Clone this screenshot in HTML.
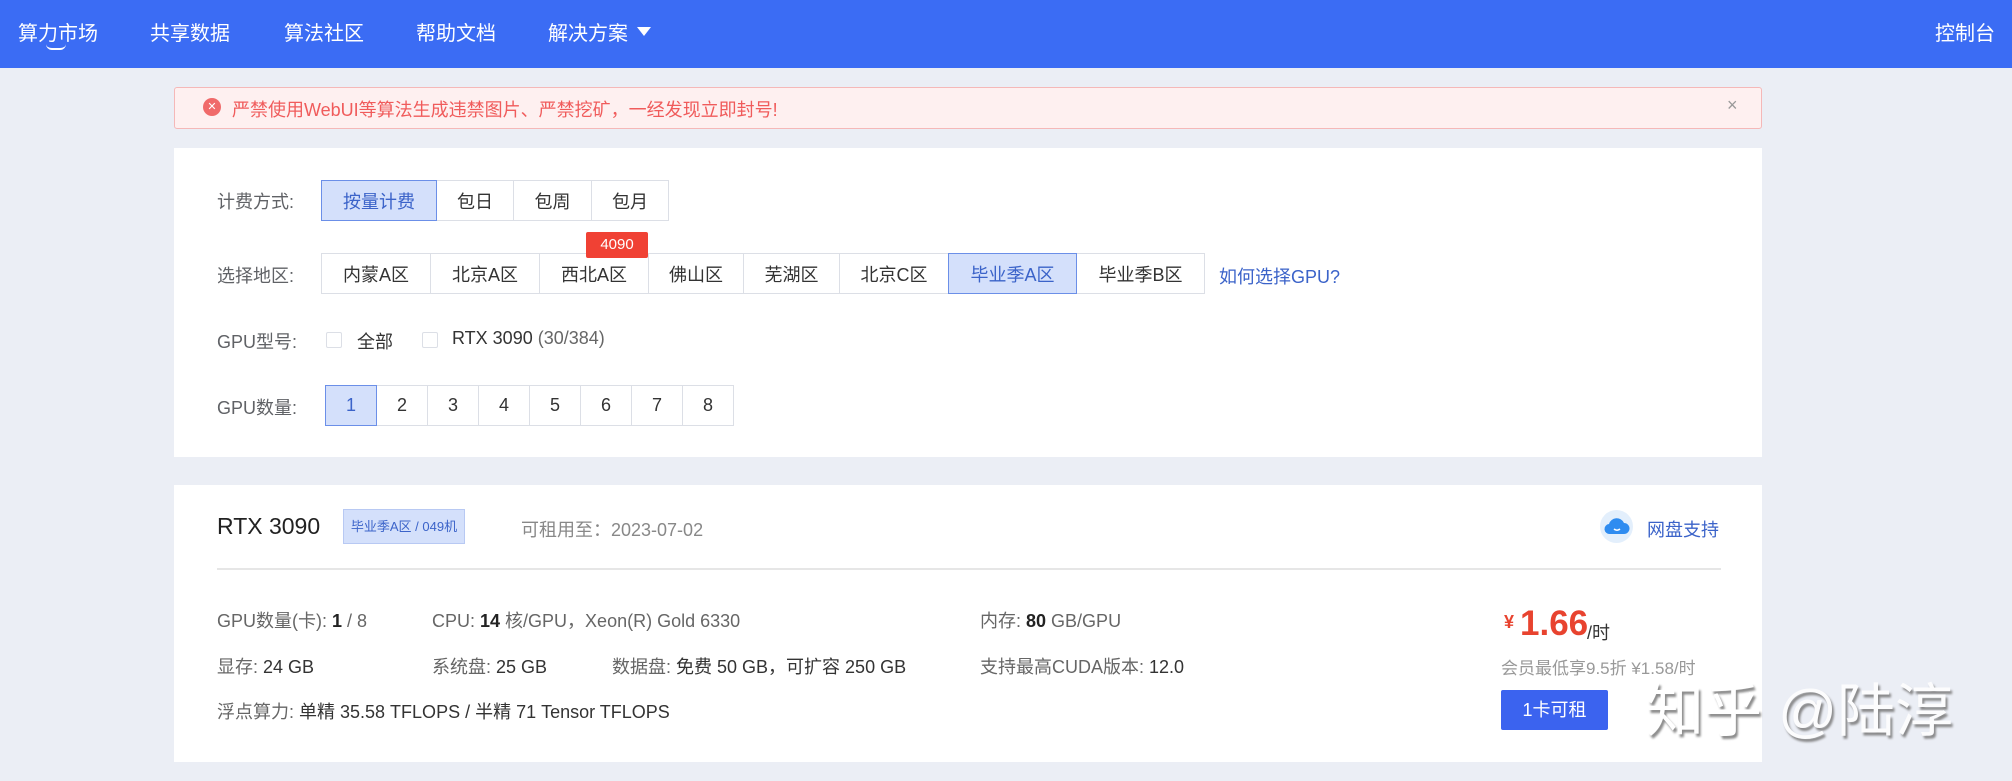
<!DOCTYPE html>
<html><head><meta charset="utf-8"><style>
*{box-sizing:border-box;margin:0;padding:0}
body{width:2012px;height:781px;background:#ebeef5;font-family:"Liberation Sans","Noto Sans CJK SC",sans-serif;font-size:18px;color:#333;position:relative;overflow:hidden}
.a{position:absolute;white-space:nowrap}
.nav{position:absolute;left:0;top:0;width:2012px;height:68px;background:#3b6cf4;color:#fff;font-size:20px}
.nav .a{top:17px}
.alert{left:174px;top:87px;width:1588px;height:42px;background:#fef0f0;border:1px solid #f5b8b8;border-radius:3px}
.card{background:#fff}
.lbl{color:#606266;font-size:18px}
.grp{display:flex;position:absolute}
.grp div{border:1px solid #dcdfe6;margin-left:-1px;display:flex;align-items:center;justify-content:center;font-size:18px;color:#333;background:#fff}
.grp div.on{background:#d4e0fb;border-color:#6b8fe8;color:#3b63c9;position:relative;z-index:1}
.cb{width:16px;height:16px;border:1px solid #dcdfe6;border-radius:2px;background:#fff}
.g{color:#666}
b{font-weight:bold;color:#222}
</style></head><body>
<div class="nav">
<div class="a" style="left:18px">算力市场</div>
<div class="a" style="left:46px;top:44px;width:20px;height:6px;border-bottom:2px solid #fff;border-radius:0 0 10px 10px"></div>
<div class="a" style="left:150px">共享数据</div>
<div class="a" style="left:284px">算法社区</div>
<div class="a" style="left:416px">帮助文档</div>
<div class="a" style="left:548px">解决方案</div>
<div class="a" style="left:637px;top:27px;width:0;height:0;border-left:7px solid transparent;border-right:7px solid transparent;border-top:9px solid #fff"></div>
<div class="a" style="left:1935px">控制台</div>
</div>
<div class="a alert"></div>
<div class="a" style="left:203px;top:98px;width:18px;height:18px;border-radius:50%;background:#f06a6a;color:#fff;font-size:11px;text-align:center;line-height:18px">✕</div>
<div class="a" style="left:232px;top:96px;color:#f05b5b;font-size:18px">严禁使用WebUI等算法生成违禁图片、严禁挖矿，一经发现立即封号!</div>
<div class="a" style="left:1727px;top:95px;color:#999;font-size:18px">×</div>

<div class="a card" style="left:174px;top:148px;width:1588px;height:309px"></div>
<div class="a lbl" style="left:217px;top:188px">计费方式:</div>
<div class="grp" style="left:322px;top:180px;height:41px">
<div class="on" style="width:116px">按量计费</div><div style="width:78px">包日</div><div style="width:79px">包周</div><div style="width:78px">包月</div></div>
<div class="a lbl" style="left:217px;top:262px">选择地区:</div>
<div class="grp" style="left:322px;top:253px;height:41px">
<div style="width:110px">内蒙A区</div><div style="width:110px">北京A区</div><div style="width:110px">西北A区</div><div style="width:96px">佛山区</div><div style="width:97px">芜湖区</div><div style="width:110px">北京C区</div><div class="on" style="width:129px">毕业季A区</div><div style="width:129px">毕业季B区</div></div>
<div class="a" style="left:586px;top:232px;width:62px;height:26px;background:#f04134;color:#fff;font-size:15px;text-align:center;line-height:26px;border-radius:2px">4090</div>
<div class="a" style="left:1219px;top:263px;color:#3b63c9">如何选择GPU?</div>
<div class="a lbl" style="left:217px;top:328px">GPU型号:</div>
<div class="a cb" style="left:326px;top:332px"></div>
<div class="a" style="left:357px;top:328px">全部</div>
<div class="a cb" style="left:422px;top:332px"></div>
<div class="a" style="left:452px;top:328px">RTX 3090 <span class="g">(30/384)</span></div>
<div class="a lbl" style="left:217px;top:394px">GPU数量:</div>
<div class="grp" style="left:326px;top:385px;height:41px">
<div class="on" style="width:52px">1</div><div style="width:52px">2</div><div style="width:52px">3</div><div style="width:52px">4</div><div style="width:52px">5</div><div style="width:52px">6</div><div style="width:52px">7</div><div style="width:52px">8</div></div>

<div class="a card" style="left:174px;top:485px;width:1588px;height:277px"></div>
<div class="a" style="left:217px;top:513px;font-size:23px;color:#222">RTX 3090</div>
<div class="a" style="left:343px;top:509px;width:122px;height:35px;background:#d4e0fb;border:1px solid #b8c9f3;color:#3b63c9;font-size:13px;text-align:center;line-height:33px">毕业季A区 / 049机</div>
<div class="a g" style="left:521px;top:516px;color:#888">可租用至：2023-07-02</div>
<div class="a" style="left:1600px;top:510px;width:33px;height:33px;border-radius:50%;background:#e3effc"></div>
<svg class="a" style="left:1604px;top:515px" width="26" height="22" viewBox="0 0 26 22"><path d="M6 19 A5 5 0 0 1 5 9 A8 8 0 0 1 20 8 A5.5 5.5 0 0 1 20 19 Z" fill="#2f8cf0"/><path d="M10 14 Q13 16.5 16 14" stroke="#fff" stroke-width="1.5" fill="none"/></svg>
<div class="a" style="left:1647px;top:516px;color:#3b63c9">网盘支持</div>
<div class="a" style="left:217px;top:568px;width:1504px;height:2px;background:#e6e6e6"></div>
<div class="a g" style="left:217px;top:607px">GPU数量(卡): <b>1</b> / 8</div>
<div class="a g" style="left:432px;top:607px">CPU: <b>14</b> 核/GPU，Xeon(R) Gold 6330</div>
<div class="a g" style="left:980px;top:607px">内存: <b>80</b> GB/GPU</div>
<div class="a g" style="left:217px;top:653px">显存: <span style="color:#333">24 GB</span></div>
<div class="a g" style="left:432px;top:653px">系统盘: <span style="color:#333">25 GB</span></div>
<div class="a g" style="left:612px;top:653px">数据盘: <span style="color:#333">免费 50 GB，可扩容 250 GB</span></div>
<div class="a g" style="left:980px;top:653px">支持最高CUDA版本: <span style="color:#333">12.0</span></div>
<div class="a g" style="left:217px;top:698px">浮点算力: <span style="color:#333">单精 35.58 TFLOPS / 半精 71 Tensor TFLOPS</span></div>
<div class="a" style="left:1504px;top:612px;color:#e8432f;font-size:18px;font-weight:bold">¥</div>
<div class="a" style="left:1520px;top:604px;color:#e8432f;font-size:35px;font-weight:bold">1.66</div>
<div class="a" style="left:1587px;top:619px;font-size:18px;color:#333">/时</div>
<div class="a" style="left:1501px;top:654px;color:#999;font-size:17px">会员最低享9.5折 ¥1.58/时</div>
<div class="a" style="left:1501px;top:690px;width:107px;height:40px;background:#3b63ef;border-radius:2px;color:#fff;text-align:center;line-height:40px">1卡可租</div>
<div class="a" style="left:1646px;top:664px;font-size:58px;color:#fff;text-shadow:2px 3px 2px #777;opacity:.85">知乎 @陆淳</div>
</body></html>
